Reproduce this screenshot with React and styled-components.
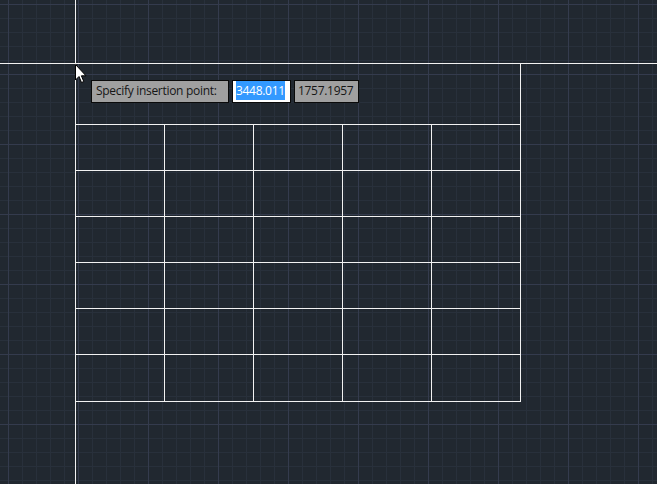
import React from 'react';
import styled, { createGlobalStyle } from 'styled-components';

const GlobalStyle = createGlobalStyle`
  html, body {
    margin: 0;
    padding: 0;
    background: #212830;
    overflow: hidden;
  }
  * {
    box-sizing: border-box;
  }
`;

const MAJOR = '#343b4d';
const MINOR = '#28303b';
const LINE = '#f2f2f2';

const Canvas = styled.div`
  position: relative;
  width: 657px;
  height: 484px;
  overflow: hidden;
  background-color: #212830;
  background-image:
    linear-gradient(to right, ${MAJOR} 1px, transparent 1px),
    linear-gradient(to bottom, ${MAJOR} 1px, transparent 1px),
    linear-gradient(to right, ${MINOR} 1px, transparent 1px),
    linear-gradient(to bottom, ${MINOR} 1px, transparent 1px);
  background-size: 70px 100%, 100% 70px, 14px 100%, 100% 14px;
  background-position: 8px 0, 0 4px, 8px 0, 0 4px;
  font-family: 'Open Sans', 'Liberation Sans', sans-serif;
`;

// the drawn table object sits at its own place on the drawing canvas
const Table = styled.div`
  position: absolute;
  left: 75px;
  top: 63px;
  width: 446px;
  height: 339px;
  border: 1px solid ${LINE};
  display: grid;
  grid-template-columns: repeat(4, 89px) 1fr;
  grid-template-rows: 61px repeat(6, 46px);
`;

const TitleCell = styled.div`
  grid-column: 1 / -1;
  border-bottom: 1px solid ${LINE};
`;

const Cell = styled.div`
  border-right: ${(p) => (p.$lastCol ? 'none' : `1px solid ${LINE}`)};
  border-bottom: ${(p) => (p.$lastRow ? 'none' : `1px solid ${LINE}`)};
`;

const CrossH = styled.div`
  position: absolute;
  left: 0;
  right: 0;
  top: 63px;
  height: 1px;
  background: ${LINE};
`;

const CrossV = styled.div`
  position: absolute;
  top: 0;
  bottom: 0;
  left: 75px;
  width: 1px;
  background: ${LINE};
`;

const Cursor = styled.svg`
  position: absolute;
  left: 75px;
  top: 64px;
`;

const Prompt = styled.div`
  position: absolute;
  left: 91px;
  top: 80px;
  display: flex;
  gap: 3px;
`;

const Field = styled.div`
  width: ${(p) => p.$w}px;
  height: 23px;
  border: 1px solid #0a0a0a;
  background: ${(p) => (p.$active ? '#ffffff' : '#a0a0a0')};
  color: #161616;
  font-size: 12px;
  letter-spacing: -0.3px;
  line-height: 20px;
  padding-left: ${(p) => p.$pad}px;
  white-space: nowrap;
  overflow: hidden;
`;

const Selected = styled.span`
  background: #3399ff;
  color: #ffffff;
  padding: 1px 0;
`;

export default function App() {
  const rows = 6;
  const cols = 5;
  const cells = [];
  for (let r = 0; r < rows; r++) {
    for (let c = 0; c < cols; c++) {
      cells.push(<Cell key={`${r}-${c}`} $lastCol={c === cols - 1} $lastRow={r === rows - 1} />);
    }
  }

  return (
    <>
      <GlobalStyle />
      <Canvas>
        <Table>
          <TitleCell />
          {cells}
        </Table>
        <CrossH />
        <CrossV />
        <Prompt>
          <Field $w={138} $pad={4}>Specify insertion point:</Field>
          <Field $w={59} $pad={3} $active>
            <Selected>3448.011</Selected>
          </Field>
          <Field $w={65} $pad={3}>1757.1957</Field>
        </Prompt>
        <Cursor width="13" height="20" viewBox="0 0 13 20">
          <path d="M0.5 0.5 L0.5 16 L4 12.5 L6.5 18.5 L8.8 17.5 L6.4 11.8 L11 11.8 Z" fill="#ffffff" stroke="#000000" strokeWidth="1" strokeLinejoin="miter" />
        </Cursor>
      </Canvas>
    </>
  );
}
